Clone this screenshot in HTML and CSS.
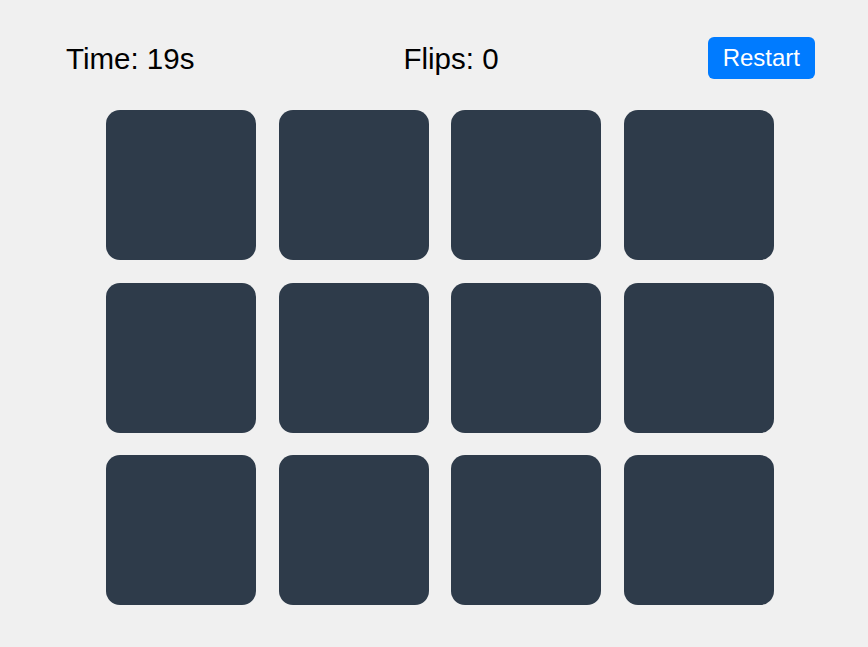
FILE: index.html
```html
<!DOCTYPE html>
<html lang="en">
<head>
    <meta charset="UTF-8">
    <meta name="viewport" content="width=device-width, initial-scale=1.0">
    <title>Memory Game</title>
    <link rel="stylesheet" href="styles.css">
</head>
<body>
    <div class="game">
        <header class="stats">
            <span id="timer">Time: 19s</span>
            <span id="flips">Flips: 0</span>
            <button id="restart">Restart</button>
        </header>

        <div class="board">
            <div class="card"></div>
            <div class="card"></div>
            <div class="card"></div>
            <div class="card"></div>
            <div class="card"></div>
            <div class="card"></div>
            <div class="card"></div>
            <div class="card"></div>
            <div class="card"></div>
            <div class="card"></div>
            <div class="card"></div>
            <div class="card"></div>
        </div>
    </div>
</body>
</html>
```

FILE: styles.css
```css
body { margin: 0; font-family: "Liberation Sans", Arial, sans-serif; background-color: #f0f0f0; color: #000; }
.game { width: 749px; margin: 37px 0 0 66px; }
.stats { display: flex; justify-content: space-between; align-items: center; height: 42px; font-size: 29.5px; }
.stats span { padding-top: 2px; }
.stats button { font-family: inherit; font-size: 24px; padding: 0 15px; height: 42px; background-color: #007bff; color: white; border: none; border-radius: 6px; cursor: pointer; }
.board { display: grid; grid-template-columns: repeat(4, 150px); grid-auto-rows: 150px; column-gap: 22.67px; row-gap: 22.5px; margin: 31px 0 0 40px; }
.card { background-color: #2e3b4a; border-radius: 14px; }
```
